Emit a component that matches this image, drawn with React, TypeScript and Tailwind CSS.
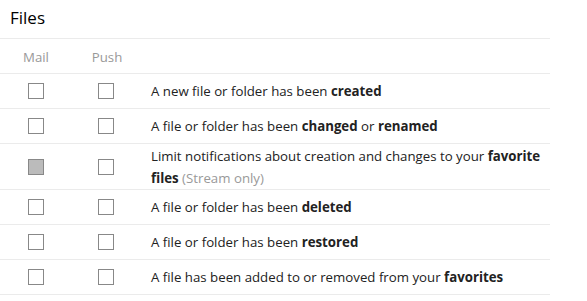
const rows: { text: React.ReactNode; mailDisabled?: boolean; tall?: boolean }[] = [
  {
    text: (
      <>
        A new file or folder has been <b>created</b>
      </>
    ),
  },
  {
    text: (
      <>
        A file or folder has been <b>changed</b> or <b>renamed</b>
      </>
    ),
  },
  {
    text: (
      <>
        Limit notifications about creation and changes to your <b>favorite files</b>{" "}
        <span className="text-[#999]">(Stream only)</span>
      </>
    ),
    mailDisabled: true,
    tall: true,
  },
  {
    text: (
      <>
        A file or folder has been <b>deleted</b>
      </>
    ),
  },
  {
    text: (
      <>
        A file or folder has been <b>restored</b>
      </>
    ),
  },
  {
    text: (
      <>
        A file has been added to or removed from your <b>favorites</b>
      </>
    ),
  },
];

const Box = ({ disabled }: { disabled?: boolean }) => (
  <span
    className={
      disabled
        ? "block h-4 w-4 border border-[#888] bg-[#bbb]"
        : "block h-4 w-4 border border-[#888] bg-white"
    }
  />
);

export default function App() {
  return (
    <div
      className="h-[301px] w-[587px] bg-white text-[#222]"
      style={{ fontFamily: '"Open Sans", "Noto Sans", sans-serif' }}
    >
      <div className="w-[550px]">
        <h2 className="h-[38px] pl-[10px] pt-[5px] text-[17px] leading-[26px] text-black">Files</h2>
        <div className="grid h-[35px] grid-cols-[72px_70px_1fr] items-center border-t border-[#ebebeb] pt-[3px] text-[13.25px] text-[#999]">
          <span className="text-center">Mail</span>
          <span className="text-center">Push</span>
          <span />
        </div>
        {rows.map((r, i) => (
          <div
            key={i}
            className={
              "grid grid-cols-[72px_67px_1fr] items-center border-t border-[#ebebeb] text-[13.25px] " +
              (r.tall ? "h-[46px] leading-[22px]" : "h-[35px]")
            }
          >
            <span className="flex justify-center">
              <Box disabled={r.mailDisabled} />
            </span>
            <span className="flex justify-center">
              <Box />
            </span>
            <span className="pl-[12px] pr-[2px] pt-[1px]">{r.text}</span>
          </div>
        ))}
        <div className="border-t border-[#ebebeb]" />
      </div>
    </div>
  );
}
